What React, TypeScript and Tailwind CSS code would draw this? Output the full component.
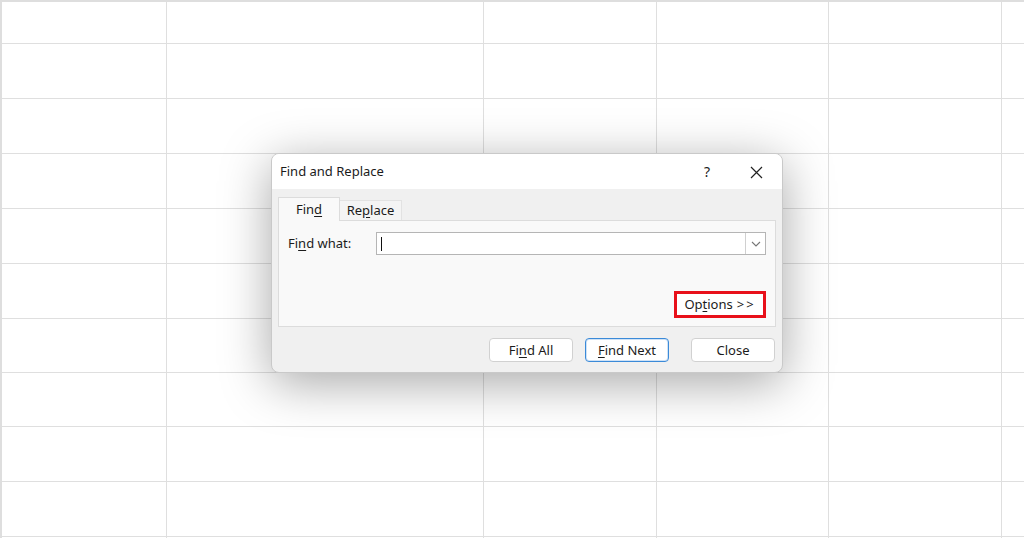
import React from 'react';

const colWidths = [166, 317, 173, 172, 173, 23];
const rowHeights = [42, 55, 55, 55, 55, 55, 54, 54, 55, 55, 3];

const font = { fontFamily: '"Noto Sans", "Open Sans", Arial, sans-serif' };

const Btn = ({ children, primary, className = '' }: { children: React.ReactNode; primary?: boolean; className?: string }) => (
  <button
    className={`h-[24px] rounded-[4px] bg-white text-[13px] text-[#1b1b1b] leading-none flex items-center justify-center ${className} ${
      primary ? 'border border-[#3b8ad8] shadow-[inset_0_0_0_1px_#cfe2f6]' : 'border border-[#d1d1d1]'
    }`}
  >
    {children}
  </button>
);

const App: React.FC = () => {
  return (
    <div className="relative w-[1024px] h-[538px] bg-white overflow-hidden" style={font}>
      {/* Spreadsheet grid */}
      <div className="flex flex-col border-t-2 border-l-2 border-[#dedede] w-[1024px] h-[538px]">
        {rowHeights.map((h, r) => (
          <div key={r} className="flex shrink-0" style={{ height: h }}>
            {colWidths.map((w, c) => (
              <div key={c} className="shrink-0 border-r border-b border-[#dfdfdf]" style={{ width: w - (c === 0 ? 1 : 0) }} />
            ))}
          </div>
        ))}
      </div>

      {/* Find and Replace dialog */}
      <div className="absolute left-[271px] top-[153px] w-[512px] h-[220px] rounded-[8px] border border-[#c9c9c9] bg-[#f0f0f0] overflow-hidden shadow-[0_10px_50px_rgba(0,0,0,0.35)] flex flex-col">
        {/* Title bar */}
        <div className="h-[35px] bg-white flex items-center pl-[8px] pr-[19px] text-[#1b1b1b]">
          <span className="text-[13px]">Find and Replace</span>
          <span className="ml-auto text-[14px] mr-[40px]">?</span>
          <svg width="13" height="13" viewBox="0 0 13 13" className="mt-[1px]">
            <path d="M1 1 L12 12 M12 1 L1 12" stroke="#222" strokeWidth="1.2" fill="none" />
          </svg>
        </div>

        {/* Body */}
        <div className="flex-1 px-[6px] pt-[8px] flex flex-col">
          {/* Tabs */}
          <div className="flex items-end h-[23px]">
            <div className="w-[62px] h-[24px] bg-[#f9f9f9] border border-b-0 border-[#dcdcdc] flex items-center justify-center text-[13px] text-[#1b1b1b] relative z-10 -mb-[1px]">
              Fin<span className="underline underline-offset-2">d</span>
            </div>
            <div className="w-[62px] h-[20px] bg-[#f4f4f4] border border-b-0 border-l-0 border-[#e2e2e2] flex items-center justify-center text-[13px] text-[#1b1b1b]">
              Re<span className="underline underline-offset-2">p</span>lace
            </div>
          </div>

          {/* Tab panel */}
          <div className="h-[107px] bg-[#f9f9f9] border border-[#dcdcdc] flex flex-col pl-[9px] pr-[9px] pt-[11px] pb-[8px]">
            <div className="flex items-center h-[23px]">
              <span className="w-[88px] text-[13px] text-[#1b1b1b]">
                Fi<span className="underline underline-offset-2">n</span>d what:
              </span>
              <div className="flex-1 h-[23px] bg-white border border-[#b5b5b5] flex items-center">
                <div className="ml-[4px] w-[1px] h-[14px] bg-[#111]" />
                <div className="ml-auto w-[20px] h-full border-l border-[#d0d0d0] flex items-center justify-center">
                  <svg width="10" height="6" viewBox="0 0 10 6">
                    <path d="M1 1 L5 5 L9 1" stroke="#777" strokeWidth="1.1" fill="none" />
                  </svg>
                </div>
              </div>
            </div>
            <div className="mt-auto flex justify-end">
              <div className="w-[92px] h-[27px] border-[3px] border-[#e8101a] bg-white flex items-center justify-center text-[13px] text-[#1b1b1b]">
                Op<span className="underline underline-offset-2">t</span>ions <span className="ml-[4px] tracking-[2px]">&gt;&gt;</span>
              </div>
            </div>
          </div>

          {/* Buttons */}
          <div className="flex justify-end mt-[11px] pr-[1px]">
            <Btn className="w-[84px]">
              Fi<span className="underline underline-offset-2">n</span>d All
            </Btn>
            <Btn primary className="w-[84px] ml-[12px]">
              <span className="underline underline-offset-2">F</span>ind Next
            </Btn>
            <Btn className="w-[84px] ml-[22px]">Close</Btn>
          </div>
        </div>
      </div>
    </div>
  );
};

export default App;
